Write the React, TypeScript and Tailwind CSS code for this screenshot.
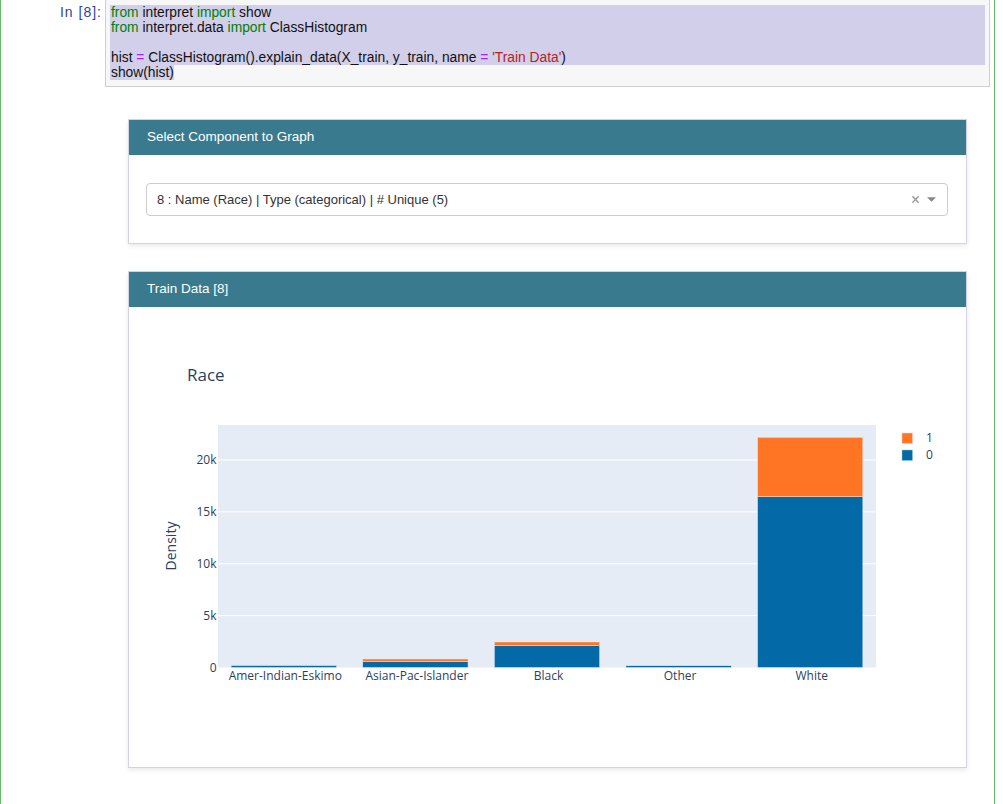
const sans = { fontFamily: '"Liberation Sans", Arial, sans-serif' }
const plotFont = '"Open Sans", Verdana, Arial, sans-serif'

const bars = [
  { label: "Amer-Indian-Eskimo", zero: 200, one: 45 },
  { label: "Asian-Pac-Islander", zero: 560, one: 260 },
  { label: "Black", zero: 2100, one: 360 },
  { label: "Other", zero: 180, one: 22 },
  { label: "White", zero: 16460, one: 5730 },
]

const X0 = 89
const X1 = 747
const YTOP = 118
const Y0 = 360.5
const PER_K = 10.375
const band = (X1 - X0) / bars.length
const barW = band * 0.8

const y = (v: number) => Y0 - (v / 1000) * PER_K

function RaceChart() {
  return (
    <svg width={837} height={460} viewBox="0 0 837 460" className="block">
      <text x={58} y={74} fontSize={17} fill="#2a3f5f" fontFamily={plotFont}>
        Race
      </text>

      <rect x={X0} y={YTOP} width={X1 - X0} height={Y0 - YTOP} fill="#e5ecf6" />
      {[5, 10, 15, 20].map((k) => (
        <line key={k} x1={X0} x2={X1} y1={y(k * 1000)} y2={y(k * 1000)} stroke="#fff" strokeWidth={1} />
      ))}

      {[0, 5, 10, 15, 20].map((k) => (
        <text
          key={k}
          x={87.5}
          y={y(k * 1000) + 4}
          fontSize={12}
          fill="#2a3f5f"
          textAnchor="end"
          fontFamily={plotFont}
        >
          {k === 0 ? "0" : `${k}k`}
        </text>
      ))}

      <text
        x={47}
        y={239}
        fontSize={14}
        fill="#2a3f5f"
        textAnchor="middle"
        fontFamily={plotFont}
        transform="rotate(-90 47 239)"
      >
        Density
      </text>

      {bars.map((b, i) => {
        const bx = X0 + band * i + (band - barW) / 2
        const yz = y(b.zero)
        const yo = y(b.zero + b.one)
        return (
          <g key={b.label}>
            <rect x={bx} y={yz} width={barW} height={Y0 - yz} fill="#036aa7" stroke="#e5ecf6" strokeWidth={0.5} />
            <rect x={bx} y={yo} width={barW} height={yz - yo} fill="#ff7523" stroke="#e5ecf6" strokeWidth={0.5} />
            <text
              x={bx + barW / 2 + 1.5}
              y={373}
              fontSize={12}
              fill="#2a3f5f"
              textAnchor="middle"
              fontFamily={plotFont}
            >
              {b.label}
            </text>
          </g>
        )
      })}

      <rect x={773} y={126} width={10.5} height={10.5} fill="#ff7523" stroke="#fcc" strokeWidth={0.5} />
      <text x={797} y={135} fontSize={12} fill="#2a3f5f" fontFamily={plotFont}>
        1
      </text>
      <rect x={773} y={143} width={10.5} height={10.5} fill="#036aa7" stroke="#9cc" strokeWidth={0.5} />
      <text x={797} y={152} fontSize={12} fill="#2a3f5f" fontFamily={plotFont}>
        0
      </text>
    </svg>
  )
}

function Card({ title, children }: { title: string; children: React.ReactNode }) {
  return (
    <div className="w-[839px] border border-[#d3d2e4] bg-white shadow-[0_2px_5px_rgba(0,0,0,0.09)]">
      <div className="h-[35px] bg-[#3a7a8f] px-[18px] flex items-center text-white text-[13.5px]" style={sans}>
        {title}
      </div>
      {children}
    </div>
  )
}

export default function App() {
  const kw = "text-[#008000]"
  const op = "text-[#aa22ff]"
  return (
    <div className="w-[995px] h-[804px] border-l border-r border-[#66bb6a] bg-white overflow-hidden">
      {/* input cell */}
      <div className="flex">
        <div
          className="w-[104px] shrink-0 text-right pr-[3px] pt-[5px] text-[14px] leading-[15px] tracking-[1px] text-[#303f9f]"
          style={sans}
        >
          In [8]:
        </div>
        <div
          className="w-[885px] border border-t-0 border-[#cfcfcf] bg-[#f7f7f7] pt-[5px] pb-[6px] px-[4px] text-[13.8px] leading-[15px] text-[#111]"
          style={sans}
        >
          <div className="bg-[#d1cfea]">
            <div className="h-[15px] pl-[1px]">
              <span className={kw}>from</span> interpret <span className={kw}>import</span> show
            </div>
            <div className="h-[15px] pl-[1px]">
              <span className={kw}>from</span> interpret.data <span className={kw}>import</span> ClassHistogram
            </div>
            <div className="h-[15px]" />
            <div className="h-[15px] pl-[1px]">
              hist <span className={op}>=</span> ClassHistogram().explain_data(X_train, y_train, name{" "}
              <span className={op}>=</span> <span className="text-[#ba2121]">'Train Data'</span>)
            </div>
          </div>
          <div className="h-[15px]">
            <span className="inline-block bg-[#d1cfea] pl-[1px]">show(hist)</span>
          </div>
        </div>
      </div>

      {/* output */}
      <div className="pl-[127px] pt-[32px] flex flex-col gap-[27px]">
        <Card title="Select Component to Graph">
          <div className="pt-[28px] pb-[27px] pl-[17px] pr-[18px]">
            <div
              className="h-[33px] border border-[#ccc] rounded-[4px] flex items-center pl-[10px] pr-[10px] text-[13px] text-[#333]"
              style={sans}
            >
              <span className="flex-1">8 : Name (Race) | Type (categorical) | # Unique (5)</span>
              <svg width="9" height="9" viewBox="0 0 10 10" className="mr-[7px]">
                <path d="M1.5 1.5 L8.5 8.5 M8.5 1.5 L1.5 8.5" stroke="#999" strokeWidth="1.5" />
              </svg>
              <svg width="9" height="5" viewBox="0 0 10 5" className="mr-[1px]">
                <path d="M0 0 L10 0 L5 5 Z" fill="#888" />
              </svg>
            </div>
          </div>
        </Card>

        <Card title="Train Data [8]">
          <RaceChart />
        </Card>
      </div>
    </div>
  )
}
